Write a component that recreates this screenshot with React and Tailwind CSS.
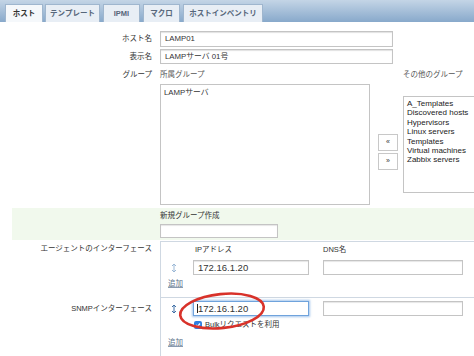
import React from 'react';

const otherGroups = [
  'A_Templates',
  'Discovered hosts',
  'Hypervisors',
  'Linux servers',
  'Templates',
  'Virtual machines',
  'Zabbix servers',
];

const tabs = [
  { name: 'ホスト', w: 'w-[38px]', active: true, ml: 'ml-0' },
  { name: 'テンプレート', w: 'w-[55px]', ml: 'ml-[2px]' },
  { name: 'IPMI', w: 'w-[37px]', ml: 'ml-[3px]' },
  { name: 'マクロ', w: 'w-[37px]', ml: 'ml-[3px]' },
  { name: 'ホストインベントリ', w: 'w-[80px]', ml: 'ml-[3px]' },
];

const SortIcon = ({ dark }) => (
  <svg width="6" height="10" viewBox="0 0 6 10" className="block">
    <path
      d="M3 1 V9 M1 3 L3 1 L5 3 M1 7 L3 9 L5 7"
      fill="none"
      stroke={dark ? '#3f6fa6' : '#9bb8d6'}
      strokeWidth="1"
    />
  </svg>
);

const Label = ({ children, className = '' }) => (
  <div className={`text-right text-[#333] ${className}`}>{children}</div>
);

export default function App() {
  return (
    <div
      className="relative w-[474px] h-[356px] overflow-hidden bg-white text-[7.5px] leading-[10px] text-[#333]"
      style={{ fontFamily: '"Liberation Sans", "Noto Sans CJK JP", sans-serif' }}
    >
      {/* tab bar */}
      <div className="h-[22px] flex items-end pl-[5px] bg-gradient-to-b from-[#c4d5e6] to-[#88a9cb]">
        {tabs.map((t) => (
          <div
            key={t.name}
            className={`${t.w} ${t.ml} h-[18px] flex items-center justify-center border border-b-0 border-[#9fb6ce] font-bold ${
              t.active ? 'bg-[#f5f8fb] text-[#333]' : 'bg-[#e8eef5] text-[#56667a]'
            }`}
          >
            {t.name}
          </div>
        ))}
      </div>

      {/* form */}
      <div className="pt-[9px]">
        <div className="grid grid-cols-[152px_1fr] gap-x-[8px] items-center">
          <Label>ホスト名</Label>
          <div className="w-[233px] h-[16px] border border-[#c4c4c4] shadow-[inset_0_1px_1px_rgba(0,0,0,0.12)] pl-[4px] flex items-center text-[7.8px]">
            LAMP01
          </div>
        </div>
        <div className="grid grid-cols-[152px_1fr] gap-x-[8px] items-center mt-[2px]">
          <Label>表示名</Label>
          <div className="w-[233px] h-[15px] border border-[#c4c4c4] shadow-[inset_0_1px_1px_rgba(0,0,0,0.12)] pl-[4px] flex items-center text-[7.8px]">
            LAMPサーバ 01号
          </div>
        </div>

        {/* groups */}
        <div className="grid grid-cols-[152px_1fr] gap-x-[8px] mt-[6px]">
          <Label>グループ</Label>
          <div>
            <div className="flex">
              <span className="w-[243px] text-[#555]">所属グループ</span>
              <span className="text-[#555]">その他のグループ</span>
            </div>
            <div className="flex items-center mt-[4px]">
              <div className="w-[210px] h-[121px] border border-[#c4c4c4] px-[3px] pt-[3px] leading-[9.5px] text-[7.8px]">
                LAMPサーバ
              </div>
              <div className="ml-[8px] flex flex-col gap-[2px] mt-[14px]">
                <div className="w-[20px] h-[17px] border border-[#c8c8c8] bg-white flex items-center justify-center text-[7px]">
                  «
                </div>
                <div className="w-[20px] h-[17px] border border-[#c8c8c8] bg-white flex items-center justify-center text-[7px]">
                  »
                </div>
              </div>
              <div className="ml-[5px] w-[90px] h-[97px] border border-[#c4c4c4] pl-[3px] pt-[2px] leading-[9.4px] text-[8px] text-[#222]">
                {otherGroups.map((g) => (
                  <div key={g}>{g}</div>
                ))}
              </div>
            </div>
          </div>
        </div>

        {/* new group */}
        <div className="mt-[3px] ml-[12px] bg-[#f1f9ed] grid grid-cols-[140px_1fr] gap-x-[8px] pt-[3px] pb-[2px]">
          <div />
          <div>
            <div className="text-[#333]">新規グループ作成</div>
            <div className="mt-[3px] w-[118px] h-[14px] border border-[#c4c4c4] bg-white shadow-[inset_0_1px_1px_rgba(0,0,0,0.1)]" />
          </div>
        </div>

        {/* agent interface */}
        <div className="grid grid-cols-[152px_1fr] gap-x-[8px] mt-[1px]">
          <Label className="pt-[3px]">エージェントのインターフェース</Label>
          <div className="border-l border-t border-[#cfd8e2] h-[56px]">
            <div className="flex h-[16px] items-center">
              <span className="ml-[34px] w-[128px]">IPアドレス</span>
              <span>DNS名</span>
            </div>
            <div className="flex items-center mt-[2px]">
              <div className="ml-[10px] w-[6px]">
                <SortIcon />
              </div>
              <div className="ml-[16px] w-[116px] h-[15px] border border-[#c4c4c4] pl-[4px] flex items-center text-[9.5px] shadow-[inset_0_1px_1px_rgba(0,0,0,0.1)]">
                172.16.1.20
              </div>
              <div className="ml-[14px] w-[140px] h-[15px] border border-[#c4c4c4] shadow-[inset_0_1px_1px_rgba(0,0,0,0.1)]" />
            </div>
            <div className="ml-[7px] mt-[4px] text-[#5d7189] underline underline-offset-[1px] decoration-[#8a9bb0]">
              追加
            </div>
          </div>
        </div>

        {/* snmp interface */}
        <div className="grid grid-cols-[152px_1fr] gap-x-[8px]">
          <Label className="pt-[7px]">SNMPインターフェース</Label>
          <div className="border-l border-t border-[#cfd8e2] pb-[10px]">
            <div className="flex items-center mt-[3px]">
              <div className="ml-[10px] w-[6px]">
                <SortIcon dark />
              </div>
              <div className="ml-[16px] w-[116px] h-[15px] border border-[#6fa3dc] pl-[3px] flex items-center text-[9.5px] shadow-[0_0_2px_1px_rgba(90,150,220,0.55)]">
                <span className="w-px h-[9px] bg-[#222]" />
                172.16.1.20
              </div>
              <div className="ml-[14px] w-[140px] h-[15px] border border-[#c4c4c4] shadow-[inset_0_1px_1px_rgba(0,0,0,0.1)]" />
            </div>
            <div className="flex items-center ml-[33px] mt-[4px]">
              <div className="w-[8px] h-[8px] rounded-[2px] bg-[#2f7ee0] flex items-center justify-center">
                <svg width="6" height="6" viewBox="0 0 6 6">
                  <path d="M1 3 L2.5 4.5 L5 1.5" fill="none" stroke="white" strokeWidth="1.2" />
                </svg>
              </div>
              <span className="ml-[3px]">Bulkリクエストを利用</span>
            </div>
            <div className="ml-[7px] mt-[8px] text-[#5d7189] underline underline-offset-[1px] decoration-[#8a9bb0]">
              追加
            </div>
          </div>
        </div>
      </div>

      {/* red annotation circle */}
      <svg className="absolute left-0 top-0 pointer-events-none" width="474" height="356">
        <ellipse
          cx="222"
          cy="311"
          rx="42"
          ry="17"
          transform="rotate(-6 222 311)"
          fill="none"
          stroke="#d8322a"
          strokeWidth="2.6"
        />
      </svg>
    </div>
  );
}
